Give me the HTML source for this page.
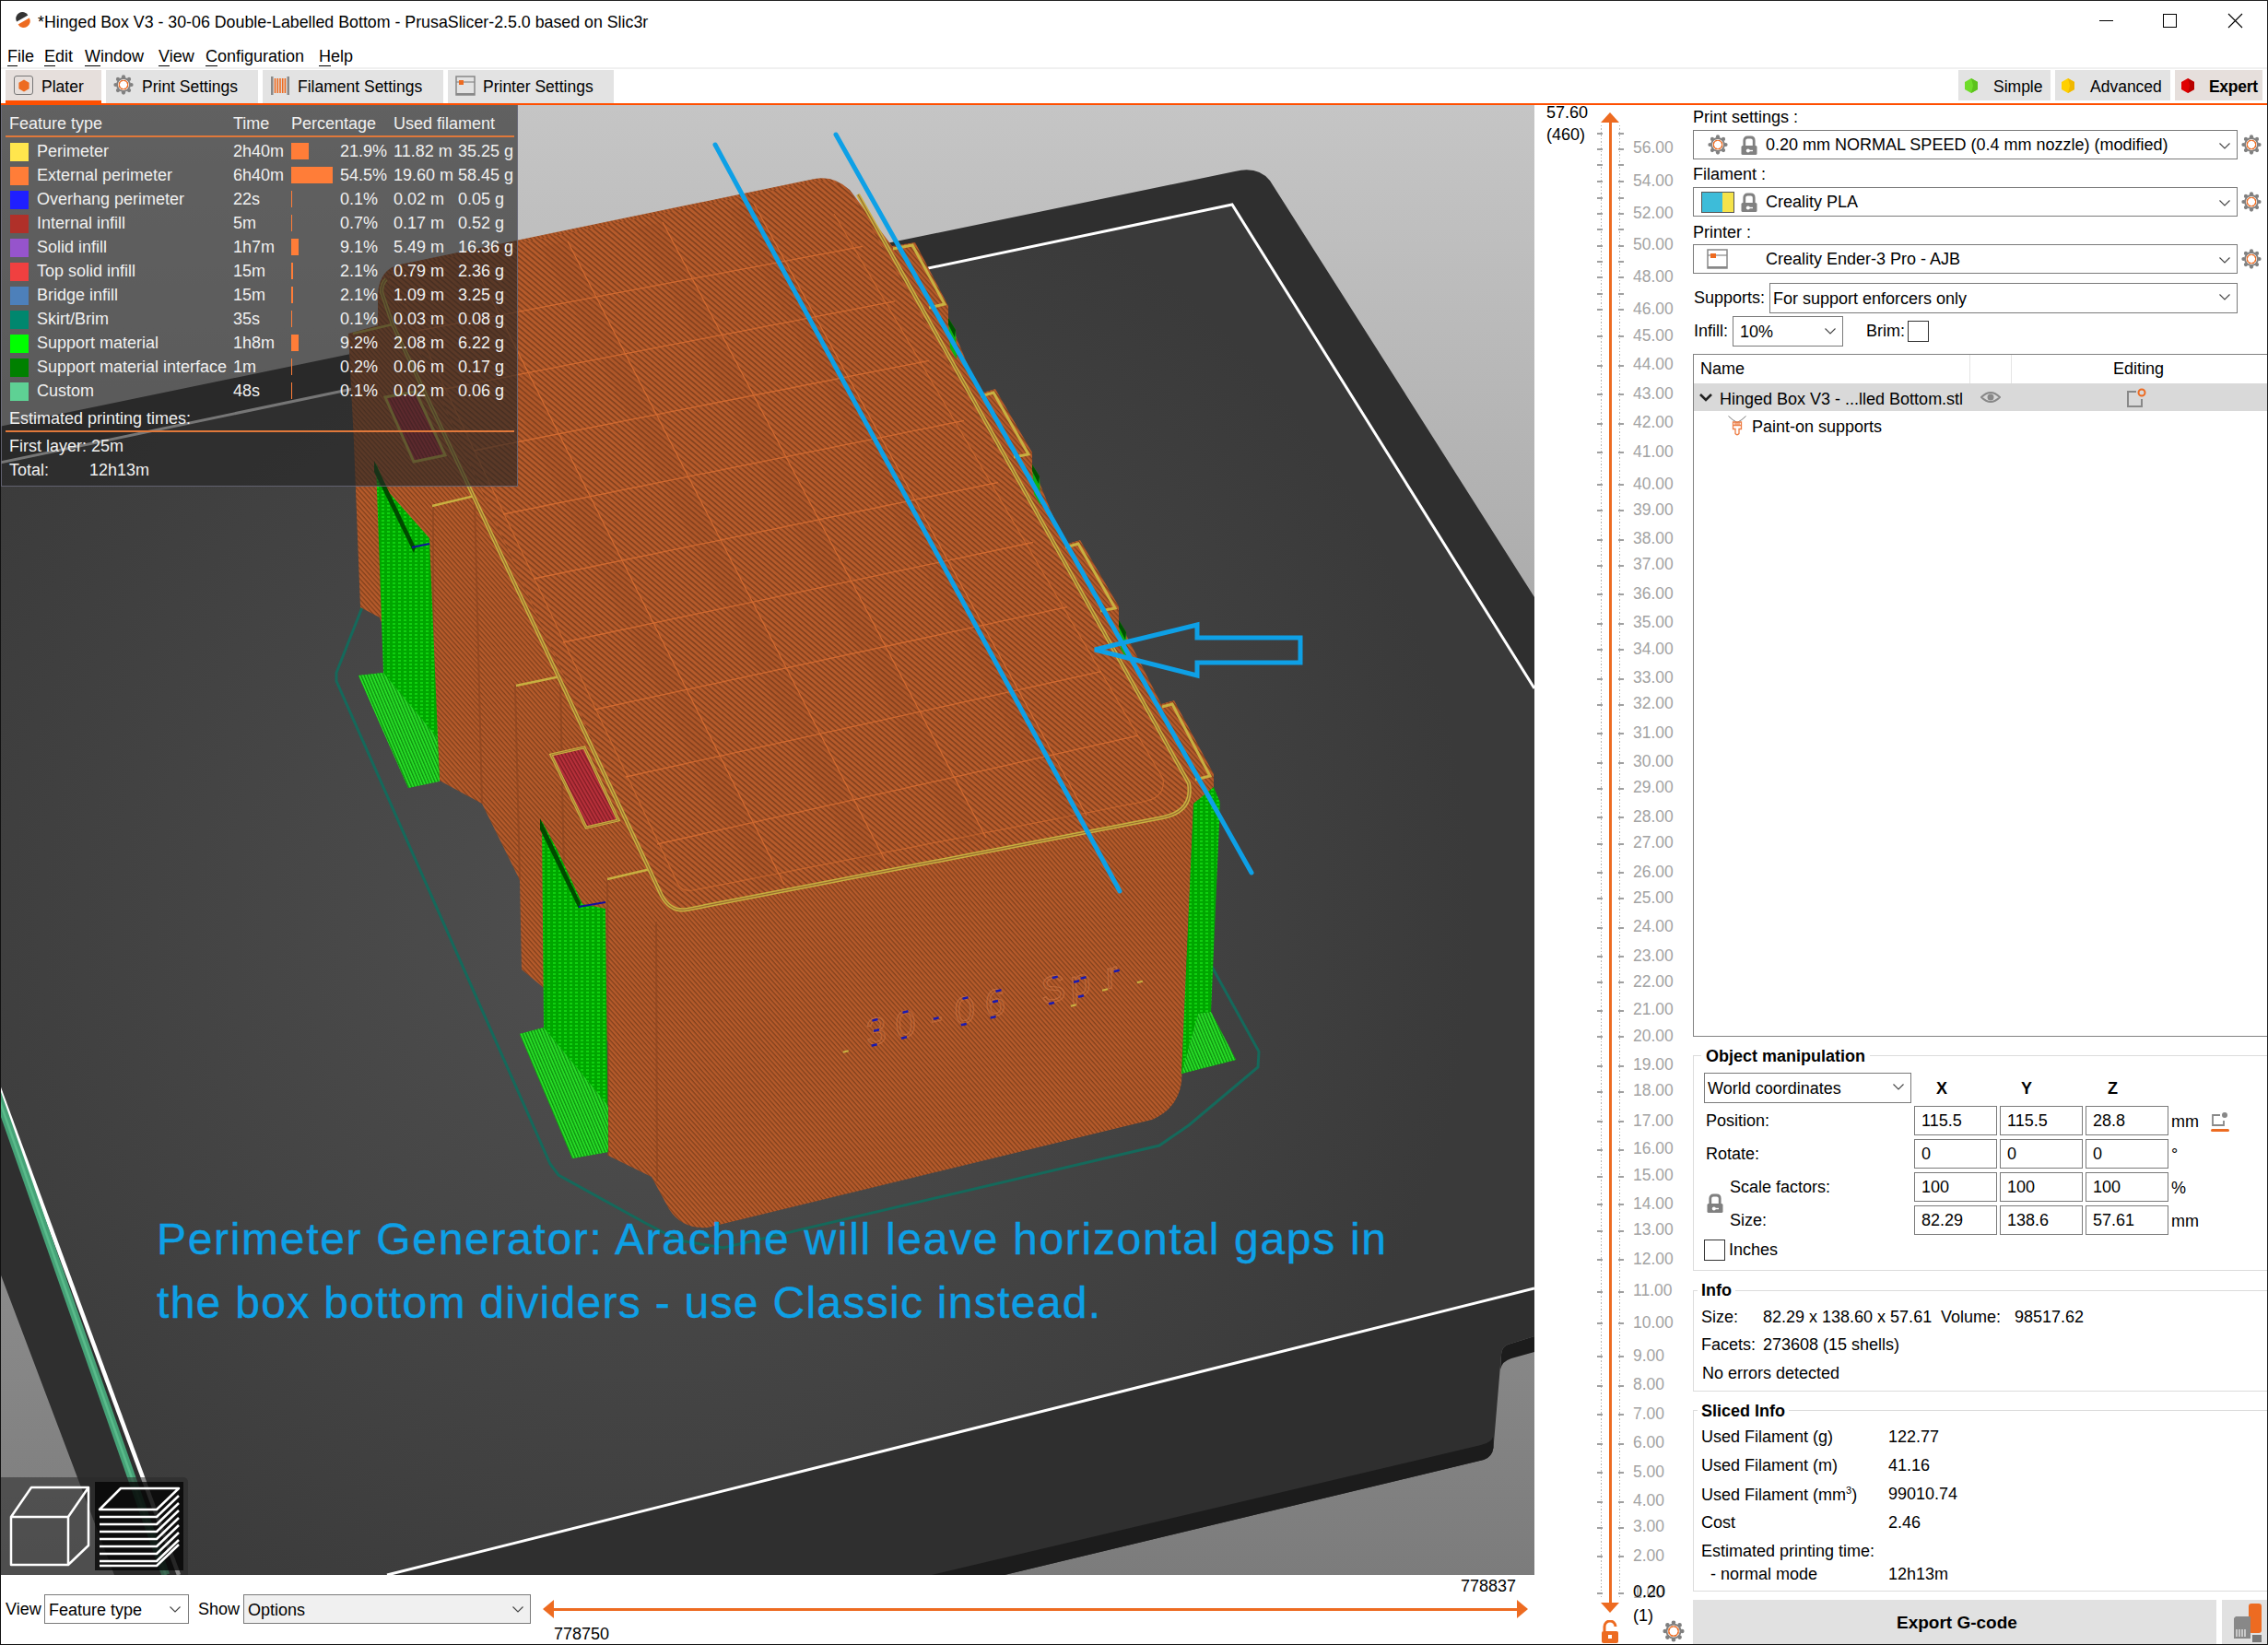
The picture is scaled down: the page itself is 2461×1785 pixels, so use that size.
<!DOCTYPE html>
<html><head><meta charset="utf-8">
<style>
*{box-sizing:border-box}
html,body{margin:0;padding:0}
body{width:2461px;height:1785px;overflow:hidden;position:relative;background:#fff;font-family:"Liberation Sans",sans-serif;color:#000}
.a{position:absolute;white-space:nowrap}
.t17{font-size:17px}
.t18{font-size:18px}
.menu span{position:absolute;top:0}
.menu u{text-decoration:none;border-bottom:1.5px solid #000}
.tab{position:absolute;top:76px;height:36px;background:#e3e3e3;font-size:17.5px}
.tab .lbl{position:absolute;top:8px}
#legend{position:absolute;left:1px;top:114px;width:561px;height:414px;background:rgba(38,38,38,0.63);border-right:1px solid rgba(110,110,128,0.8);border-bottom:1px solid rgba(110,110,128,0.8);border-left:1px solid rgba(110,110,128,0.8);color:#f0f0f0;font-size:18px}
#legend .r{position:absolute;left:0;height:26px;width:556px}
#legend .r span{position:absolute;top:2px}
#legend .sw{position:absolute;left:9px;top:3px;width:20px;height:20px}
#legend .bar{position:absolute;left:314px;top:2.5px;height:18px;background:#ff7d38}
.cb{position:absolute;border:1px solid #7a7a7a;background:#fff}
.cb .v{position:absolute;left:9px;top:4px;font-size:18px}
.chev{position:absolute;width:10px;height:10px;border-right:1.5px solid #333;border-bottom:1.5px solid #333;transform:rotate(45deg)}
.fld{position:absolute;border:1px solid #7a7a7a;background:#fff;height:32px;width:90px;font-size:18px;padding:5px 0 0 7px}
.lab{position:absolute;font-size:18px;white-space:nowrap}
.sl{position:absolute;left:1772px;font-size:17.5px;color:#a3a3a3}
</style></head>
<body>
<!-- title bar -->
<svg class="a" style="left:15px;top:11px" width="20" height="22" viewBox="0 0 20 22">
 <path d="M3.2 12.6 A7 7 0 0 1 15.4 5.6 Z" fill="#333"/>
 <path d="M4.6 15.4 L16.8 8.4 A7 7 0 0 1 4.6 15.4 Z" fill="#ed6b21"/>
</svg>
<div class="a" id="title" style="left:41px;top:14px;font-size:17.8px">*Hinged Box V3 - 30-06 Double-Labelled Bottom - PrusaSlicer-2.5.0 based on Slic3r</div>
<div class="a" style="left:2278px;top:22px;width:15px;height:1px;background:#000"></div>
<div class="a" style="left:2347px;top:15px;width:15px;height:15px;border:1px solid #000"></div>
<svg class="a" style="left:2417px;top:14px" width="17" height="17"><path d="M1 1L16 16M16 1L1 16" stroke="#000" stroke-width="1.1"/></svg>

<!-- menu -->
<div class="a menu" style="left:0;top:51px;height:24px;width:600px;font-size:18px">
 <span style="left:8px"><u>F</u>ile</span>
 <span style="left:48px"><u>E</u>dit</span>
 <span style="left:92px"><u>W</u>indow</span>
 <span style="left:172px"><u>V</u>iew</span>
 <span style="left:223px"><u>C</u>onfiguration</span>
 <span style="left:346px"><u>H</u>elp</span>
</div>
<div class="a" style="left:1px;top:73px;width:2459px;height:2px;background:#f0f0f0"></div>

<!-- tabs -->
<div class="tab" style="left:6px;width:104px;background:#e6dfdc"><div class="a" style="left:0;top:33px;width:104px;height:3px;background:#ff4f00"></div>
 <div class="a" style="left:9px;top:6px;width:21px;height:21px;border:1.5px solid #777;border-radius:3px"></div>
 <svg class="a" style="left:13px;top:10px" width="14" height="14" viewBox="0 0 14 14"><path d="M7 0.5L12.6 3.7V10.3L7 13.5L1.4 10.3V3.7Z" fill="#ed6b21"/></svg>
 <span class="lbl" style="left:39px">Plater</span></div>
<div class="tab" style="left:115px;width:165px">
 <svg class="a" style="left:8px;top:5px" width="22" height="22" viewBox="-1 -1 24 24"><circle cx="11" cy="11" r="8.6" fill="#808080"/><circle cx="20.30" cy="11.00" r="2.3" fill="#808080"/><circle cx="17.58" cy="17.58" r="2.3" fill="#808080"/><circle cx="11.00" cy="20.30" r="2.3" fill="#808080"/><circle cx="4.42" cy="17.58" r="2.3" fill="#808080"/><circle cx="1.70" cy="11.00" r="2.3" fill="#808080"/><circle cx="4.42" cy="4.42" r="2.3" fill="#808080"/><circle cx="11.00" cy="1.70" r="2.3" fill="#808080"/><circle cx="17.58" cy="4.42" r="2.3" fill="#808080"/><circle cx="11" cy="11" r="6.6" fill="#fff"/><circle cx="11" cy="11" r="5.2" fill="none" stroke="#ed6b21" stroke-width="1.3"/><circle cx="15.80" cy="12.99" r="0.9" fill="#ed6b21"/><circle cx="12.99" cy="15.80" r="0.9" fill="#ed6b21"/><circle cx="9.01" cy="15.80" r="0.9" fill="#ed6b21"/><circle cx="6.20" cy="12.99" r="0.9" fill="#ed6b21"/><circle cx="6.20" cy="9.01" r="0.9" fill="#ed6b21"/><circle cx="9.01" cy="6.20" r="0.9" fill="#ed6b21"/><circle cx="12.99" cy="6.20" r="0.9" fill="#ed6b21"/><circle cx="15.80" cy="9.01" r="0.9" fill="#ed6b21"/></svg>
 <span class="lbl" style="left:39px">Print Settings</span></div>
<div class="tab" style="left:285px;width:196px">
 <svg class="a" style="left:8px;top:6px" width="22" height="22" viewBox="0 0 22 22"><rect x="1" y="1" width="2.5" height="20" fill="#888"/><rect x="18.5" y="1" width="2.5" height="20" fill="#888"/><path d="M5.5 3V19M8.3 3V19M11 3V19M13.7 3V19M16.4 3V19" stroke="#ed6b21" stroke-width="1.6"/></svg>
 <span class="lbl" style="left:38px">Filament Settings</span></div>
<div class="tab" style="left:486px;width:180px">
 <svg class="a" style="left:8px;top:6px" width="22" height="22" viewBox="0 0 22 22"><rect x="1" y="1" width="20" height="20" fill="none" stroke="#888" stroke-width="1.5"/><line x1="1" y1="7" x2="21" y2="7" stroke="#888" stroke-width="1.2"/><line x1="1" y1="20" x2="21" y2="20" stroke="#888" stroke-width="2"/><rect x="4" y="5" width="5" height="5" fill="#ed6b21"/></svg>
 <span class="lbl" style="left:38px">Printer Settings</span></div>

<div class="tab" style="height:33px;left:2125px;width:100px">
 <svg class="a" style="left:6px;top:8px" width="16" height="18" viewBox="0 0 16 18"><path d="M8 1L15 5V13L8 17L1 13V5Z" fill="#6fdc2a"/><path d="M8 1L15 5V13L8 17L10 9Z" fill="#5cc21c"/></svg>
 <span class="lbl" style="left:38px">Simple</span></div>
<div class="tab" style="height:33px;left:2230px;width:125px">
 <svg class="a" style="left:6px;top:8px" width="16" height="18" viewBox="0 0 16 18"><path d="M8 1L15 5V13L8 17L1 13V5Z" fill="#ffd000"/><path d="M8 1L15 5V13L8 17L10 9Z" fill="#f0b800"/></svg>
 <span class="lbl" style="left:38px">Advanced</span></div>
<div class="tab" style="height:33px;left:2360px;width:95px;background:#e6dfdc">
 <svg class="a" style="left:6px;top:8px" width="16" height="18" viewBox="0 0 16 18"><path d="M8 1L15 5V13L8 17L1 13V5Z" fill="#e00000"/><path d="M8 1L15 5V13L8 17L10 9Z" fill="#b80000"/></svg>
 <span class="lbl" style="left:37px;font-weight:bold;letter-spacing:-0.3px">Expert</span></div>
<div class="a" style="left:1px;top:112px;width:2459px;height:2px;background:#ff4f00"></div>

<!-- VIEWPORT -->
<svg id="vp" class="a" style="left:0;top:114px" width="1665" height="1595" viewBox="0 114 1665 1595">
 <defs>
  <linearGradient id="bg" x1="0" y1="114" x2="0" y2="1709" gradientUnits="userSpaceOnUse">
   <stop offset="0" stop-color="#c5c5c5"/><stop offset="1" stop-color="#7c7c7c"/>
  </linearGradient>
  <radialGradient id="bedg" cx="700" cy="1000" r="900" gradientUnits="userSpaceOnUse">
   <stop offset="0" stop-color="#505050"/><stop offset="1" stop-color="#3a3a3a"/>
  </radialGradient>
 </defs>
 <rect x="0" y="114" width="1665" height="1595" fill="url(#bg)"/>
 <!-- frame -->
 <path id="frame" d="M-50 473 L1340 186 Q1365 180 1378 196 L1665 648 L1665 1450 L1636 1459 Q1629 1462 1629 1470 L1620.5 1571 Q1619 1581 1610 1584 L1090 1709 L124 1709 L3 1389 L-50 1250 Z" fill="#2f2f2f"/>
 <path d="M1011 1709 L1607 1568 Q1619 1565 1620 1559 L1620.5 1571 Q1619 1581 1610 1584 L1090 1709 Z" fill="#1c1c1c"/><path d="M1628 1486 L1629 1470 Q1629 1462 1636 1459 L1665 1450 L1665 1467 L1640 1474 Q1630 1477 1628 1486 Z" fill="#1c1c1c"/>
 <!-- bed inner -->
 <path id="bed" d="M-100 523 L1337 222 L1665 747 L1665 1398 L420 1709 L194 1709 L0 1183 L-100 1100 Z" fill="url(#bedg)"/>
 <path d="M-100 523 L1337 222 L1665 747 M1665 1398 L420 1709" fill="none" stroke="#fff" stroke-width="3"/><path d="M194 1709 L-2 1178" fill="none" stroke="#fff" stroke-width="4.5"/>
 <path d="M-4.4 1183 L179.8 1709" stroke="#46a277" stroke-width="9"/><path d="M-4.4 1183 L179.8 1709" stroke="#5abb8b" stroke-width="2.5"/>

<!--SCENE-->

 <defs>
  <pattern id="ostripe" width="3.7" height="3.7" patternUnits="userSpaceOnUse" patternTransform="rotate(48)">
   <rect width="3.7" height="3.7" fill="#b65b2b"/><rect y="0" width="3.7" height="1.3" fill="#80401c"/>
  </pattern>
  <pattern id="ostripe2" width="4.5" height="4.5" patternUnits="userSpaceOnUse" patternTransform="rotate(40)">
   <rect width="4.5" height="4.5" fill="#b65b2b"/><rect y="0" width="4.5" height="1.5" fill="#7e3e1c"/>
  </pattern>
  <pattern id="rstripe" width="3.5" height="3.5" patternUnits="userSpaceOnUse" patternTransform="rotate(60)">
   <rect width="3.5" height="3.5" fill="#b8303a"/><rect y="0" width="3.5" height="1.3" fill="#801c24"/>
  </pattern>
  <pattern id="gstripe" width="6" height="4" patternUnits="userSpaceOnUse">
   <rect width="6" height="4" fill="#00a600"/><rect x="0" y="0" width="3" height="2" fill="#10d010"/>
  </pattern>
  <pattern id="gbrim" width="3.2" height="3.2" patternUnits="userSpaceOnUse" patternTransform="rotate(67)">
   <rect width="3.2" height="3.2" fill="#0e900e"/><rect y="0" width="3.2" height="1.9" fill="#28dc28"/>
  </pattern>
 </defs>
 <!-- skirt -->
 <path d="M393 659 L365 730 L365 739 L597 1263 L606 1275 L700 1327 L737 1346 L785 1354 L1258 1243 L1290 1221 L1365 1158 L1366 1141 L1315 1049" fill="none" stroke="#15695b" stroke-width="3"/>

 <path d="M434 287 L884 194 Q905 190 922 206 L968 267 L993 263 L1029 332 L1029 345 L1063 427 L1080 422 L1120 491 L1120 504 L1155 591 L1172 586 L1214 658 L1214 673 L1260 764 L1274 760 L1317 840 L1317 856 L1295 872 L1282 1175 Q1277 1204 1250 1215 L768 1332 Q740 1334 726 1312 L707 1277 L660 1254 L660 1130 L566 1052 L564 955 L523 872 L477 847 L412 670 L391 659 L384 480 L378 362 L410 353 L410 318 Q412 292 434 287 Z" fill="url(#ostripe)"/>
 <path d="M422 305 Q420 294 434 291 L884 197 Q910 193 925 211 L1290 850 Q1296 882 1262 888 L745 988 Q728 991 718 973 Z" fill="url(#ostripe2)"/>
 <path d="M470 548 L470 848 M515 540 L523 872 M559 744 L564 955 M608 735 L612 955 M659 954 L660 1254 M712 1000 L713 1282" stroke="#8a4420" stroke-width="2" opacity="0.6"/>
 <path d="M383 362 L426 352 M469 549 L515 538 M560 744 L608 734 M659 954 L706 943" stroke="#c8b040" stroke-width="2.5"/>
 <path d="M931 211 L1290 850 Q1295 880 1262 887 L745 987 Q728 990 718 972 L426 352 L414 317 Q414 308 419 303" fill="none" stroke="#c8b040" stroke-width="4.2"/><path d="M931 211 L1290 850 Q1295 880 1262 887 L745 987 Q728 990 718 972 L426 352 L414 317 Q414 308 419 303" fill="none" stroke="#9a6a30" stroke-width="1.2"/>
 <path d="M440 330 L735 958 Q740 968 752 966 L1240 870 Q1265 866 1262 845 L905 232" fill="none" stroke="#cf6a30" stroke-width="1.2" opacity="0.8"/>
 <path d="M485 290 L513 284 L851 960 L823 966 Z" fill="#8c4420" opacity="0.16"/>
 <path d="M588 268 L616 262 L961 935 L933 941 Z" fill="#8c4420" opacity="0.16"/>
 <path d="M691 247 L719 241 L1070 909 L1042 915 Z" fill="#8c4420" opacity="0.16"/>
 <path d="M790 227 L818 221 L1179 885 L1151 891 Z" fill="#8c4420" opacity="0.16"/>
 <path d="M513 284 L851 960 M616 262 L961 935 M719 241 L1070 909 M818 221 L1179 885 M453 359 L936 267.3 M483 422 L971 326.8 M514 489 L1008 391.4 M546 558 L1046 456.4 M579 628 L1083 523.5 M611 697 L1121 588.5 M645 770 L1158 658.6 M679 843 L1195 728.7 M713 916 L1235 798.2" stroke="#d86e33" stroke-width="1.3" fill="none" opacity="0.85"/>
 <path d="M969 270 L990 266 L1025 330 L1008 334 M1064 430 L1078 426 L1116 493 L1100 496 M1156 594 L1170 590 L1210 660 L1194 663 M1261 767 L1272 764 L1313 842 L1297 846" fill="none" stroke="#c8b040" stroke-width="3"/>
 <path d="M1029 345 L1037 358 L1038 390 L1031 378 Z M1120 504 L1128 517 L1129 548 L1122 536 Z M1214 673 L1222 686 L1223 716 L1216 704 Z" fill="#10b010"/><path d="M1029 345 L1037 358 L1036 366 L1029 352 Z M1120 504 L1128 517 L1127 525 L1120 511 Z M1214 673 L1222 686 L1221 694 L1214 680 Z" fill="#005000"/>
 <path d="M408 503 L420 532 L466 584 L477 847 L443 855 L389 733 L416 730 Z" fill="url(#gstripe)"/>
 <path d="M389 733 L443 855 L477 848 L474 800 L416 730 Z" fill="url(#gbrim)"/>
 <path d="M406 500 L451 594 L449 600 L406 512 Z" fill="#004a00"/><path d="M447 594 L466 590" stroke="#1010a0" stroke-width="2"/>
 <path d="M588 891 L605 923 L632 981 L657 986 L660 1250 L621 1257 L564 1122 L590 1115 Z" fill="url(#gstripe)"/>
 <path d="M564 1122 L621 1257 L660 1250 L660 1200 L590 1115 Z" fill="url(#gbrim)"/>
 <path d="M586 888 L630 980 L628 986 L586 900 Z" fill="#004a00"/><path d="M628 984 L657 979" stroke="#1010a0" stroke-width="2"/>
 <path d="M1317 854 L1324 871 L1314 1098 L1341 1150 L1282 1165 L1295 872 Z" fill="url(#gstripe)"/>
 <path d="M1282 1165 L1341 1150 L1314 1098 L1300 1100 Z" fill="url(#gbrim)"/>
 <path d="M418 431 L451 425 L483 494 L449 501 Z" fill="url(#rstripe)" stroke="#c8b040" stroke-width="3"/>
 <path d="M598 819 L634 811 L671 890 L636 898 Z" fill="url(#rstripe)" stroke="#c8b040" stroke-width="3.2"/><path d="M598 819 L634 811 L671 890 L636 898 Z" fill="none" stroke="#9a6a30" stroke-width="0.8"/>
 <g transform="translate(917 1141) rotate(-13.4)" font-family="Liberation Sans" font-size="40" font-style="italic" fill="none" stroke="#d27a48" stroke-width="1.1" opacity="0.6"><text x="37" y="0" text-anchor="middle">3</text><text x="70" y="0" text-anchor="middle">0</text><text x="104" y="0" text-anchor="middle">-</text><text x="136" y="0" text-anchor="middle">0</text><text x="170" y="0" text-anchor="middle">6</text><text x="235" y="0" text-anchor="middle">S</text><text x="265" y="0" text-anchor="middle">p</text><text x="300" y="0" text-anchor="middle">r</text></g><path d="M946.5 1107.4 L952.5 1106.0 M948.0 1118.7 L954.0 1117.3 M945.7 1134.7 L951.7 1133.3 M979.5 1098.7 L985.5 1097.3 M978.0 1126.7 L984.0 1125.3 M1012.7 1105.7 L1018.7 1104.3 M1044.5 1083.7 L1050.5 1082.3 M1042.8 1112.3 L1048.8 1110.9 M1080.5 1075.7 L1086.5 1074.3 M1077.0 1087.3 L1083.0 1085.9 M1074.7 1104.4 L1080.7 1103.0 M1141.7 1061.2 L1147.7 1059.8 M1138.0 1089.3 L1144.0 1087.9 M1172.6 1061.7 L1178.6 1060.3 M1165.0 1065.7 L1171.0 1064.3 M1170.0 1081.7 L1176.0 1080.3 M1208.7 1054.2 L1214.7 1052.8" stroke="#1a1ab0" stroke-width="2.6"/><path d="M914.7 1141.7 L920.7 1140.3 M1233.8 1066.2 L1239.8 1064.8 M1196.0 1074.7 L1202.0 1073.3 M1161.8 1091.7 L1167.8 1090.3" stroke="#c8b040" stroke-width="2.2"/>
 <path d="M776 157 L1215 967 M907 146 L1358 947" stroke="#0ea0e6" stroke-width="5" stroke-linecap="round"/>
 <path d="M1188 705 L1299 678 L1299 692 L1411 692 L1411 719 L1299 719 L1299 733 Z" fill="none" stroke="#0ea0e6" stroke-width="5" stroke-linejoin="miter"/>
 <text x="170" y="1361" font-family="Liberation Sans" font-size="48" fill="#0ea0e6" stroke="#0ea0e6" stroke-width="0.4" id="ann1" textLength="1334" lengthAdjust="spacing">Perimeter Generator: Arachne will leave horizontal gaps in</text>
 <text x="170" y="1430" font-family="Liberation Sans" font-size="48" fill="#0ea0e6" stroke="#0ea0e6" stroke-width="0.4" id="ann2" textLength="1024" lengthAdjust="spacing">the box bottom dividers - use Classic instead.</text>
<!--/SCENE-->
</svg>

<div id="legend">
 <div class="r" style="top:8px"><span style="left:8px">Feature type</span><span style="left:251px">Time</span><span style="left:314px">Percentage</span><span style="left:425px">Used filament</span></div>
 <div class="a" style="left:4px;top:33px;width:552px;height:1.5px;background:#e0783a"></div>
 <div class="r" style="top:38px"><div class="sw" style="background:#ffe64d"></div><span style="left:38px">Perimeter</span><span style="left:251px">2h40m</span><div class="bar" style="width:19px"></div><span style="left:367px">21.9%</span><span style="left:425px">11.82 m</span><span style="left:495px">35.25 g</span></div>
 <div class="r" style="top:64px"><div class="sw" style="background:#ff7d38"></div><span style="left:38px">External perimeter</span><span style="left:251px">6h40m</span><div class="bar" style="width:45px"></div><span style="left:367px">54.5%</span><span style="left:425px">19.60 m</span><span style="left:495px">58.45 g</span></div>
 <div class="r" style="top:90px"><div class="sw" style="background:#1f1fff"></div><span style="left:38px">Overhang perimeter</span><span style="left:251px">22s</span><div class="bar" style="width:1px"></div><span style="left:367px">0.1%</span><span style="left:425px">0.02 m</span><span style="left:495px">0.05 g</span></div>
 <div class="r" style="top:116px"><div class="sw" style="background:#b03029"></div><span style="left:38px">Internal infill</span><span style="left:251px">5m</span><div class="bar" style="width:1px"></div><span style="left:367px">0.7%</span><span style="left:425px">0.17 m</span><span style="left:495px">0.52 g</span></div>
 <div class="r" style="top:142px"><div class="sw" style="background:#9654cc"></div><span style="left:38px">Solid infill</span><span style="left:251px">1h7m</span><div class="bar" style="width:8px"></div><span style="left:367px">9.1%</span><span style="left:425px">5.49 m</span><span style="left:495px">16.36 g</span></div>
 <div class="r" style="top:168px"><div class="sw" style="background:#f04040"></div><span style="left:38px">Top solid infill</span><span style="left:251px">15m</span><div class="bar" style="width:2px"></div><span style="left:367px">2.1%</span><span style="left:425px">0.79 m</span><span style="left:495px">2.36 g</span></div>
 <div class="r" style="top:194px"><div class="sw" style="background:#4d80ba"></div><span style="left:38px">Bridge infill</span><span style="left:251px">15m</span><div class="bar" style="width:2px"></div><span style="left:367px">2.1%</span><span style="left:425px">1.09 m</span><span style="left:495px">3.25 g</span></div>
 <div class="r" style="top:220px"><div class="sw" style="background:#00876e"></div><span style="left:38px">Skirt/Brim</span><span style="left:251px">35s</span><div class="bar" style="width:1px"></div><span style="left:367px">0.1%</span><span style="left:425px">0.03 m</span><span style="left:495px">0.08 g</span></div>
 <div class="r" style="top:246px"><div class="sw" style="background:#00ff00"></div><span style="left:38px">Support material</span><span style="left:251px">1h8m</span><div class="bar" style="width:8px"></div><span style="left:367px">9.2%</span><span style="left:425px">2.08 m</span><span style="left:495px">6.22 g</span></div>
 <div class="r" style="top:272px"><div class="sw" style="background:#008000"></div><span style="left:38px">Support material interface</span><span style="left:251px">1m</span><div class="bar" style="width:1px"></div><span style="left:367px">0.2%</span><span style="left:425px">0.06 m</span><span style="left:495px">0.17 g</span></div>
 <div class="r" style="top:298px"><div class="sw" style="background:#5ed194"></div><span style="left:38px">Custom</span><span style="left:251px">48s</span><div class="bar" style="width:1px"></div><span style="left:367px">0.1%</span><span style="left:425px">0.02 m</span><span style="left:495px">0.06 g</span></div>
 <div class="r" style="top:328px"><span style="left:8px">Estimated printing times:</span></div>
 <div class="a" style="left:4px;top:353px;width:552px;height:1.5px;background:#e0783a"></div>
 <div class="r" style="top:358px"><span style="left:8px">First layer: 25m</span></div>
 <div class="r" style="top:384px"><span style="left:8px">Total:</span><span style="left:95px">12h13m</span></div>
</div>
<div class="a" style="left:1px;top:1603px;width:203px;height:106px;background:rgba(40,40,40,0.55);border-radius:0 5px 0 0"></div>
<div class="a" style="left:103px;top:1608px;width:96px;height:96px;background:rgba(0,0,0,0.72)"></div>
<svg class="a" style="left:0;top:1600px" width="210" height="109" viewBox="0 1600 210 109">
 <path d="M12 1646 L34 1614 L96 1614 L96 1677 L74 1698 L12 1698 Z M12 1646 L74 1646 L96 1614 M74 1646 L74 1698" fill="none" stroke="#fff" stroke-width="2.5" stroke-linejoin="round"/>
 <g fill="none" stroke="#fff" stroke-width="2.5" stroke-linejoin="round">
  <path d="M108 1638 L131 1615 L194 1615 L170 1638 Z"/>
  <path d="M108 1646 L170 1646 L194 1623 M108 1654 L170 1654 L194 1631 M108 1662 L170 1662 L194 1639 M108 1670 L170 1670 L194 1647 M108 1678 L170 1678 L194 1655 M108 1686 L170 1686 L194 1663 M108 1694 L170 1694 L194 1671 M108 1699 L170 1699 L194 1676"/>
 </g>
</svg>
<!-- layer slider -->
<div class="a" style="left:1736.5px;top:136px;width:1.5px;height:1598px;background:repeating-linear-gradient(to bottom,#b4b4b4 0,#b4b4b4 1.2px,transparent 1.2px,transparent 3.5px)"></div>
<div class="a" style="left:1756.5px;top:136px;width:1.5px;height:1598px;background:repeating-linear-gradient(to bottom,#b4b4b4 0,#b4b4b4 1.2px,transparent 1.2px,transparent 3.5px)"></div>
<div class="a" style="left:1746px;top:131px;width:3px;height:1610px;background:#ed6b21"></div>
<svg class="a" style="left:1736px;top:120px" width="22" height="14"><path d="M1 13 L11 2 L21 13 Z" fill="#ed6b21"/></svg>
<svg class="a" style="left:1736px;top:1738px" width="22" height="14"><path d="M1 1 L11 12 L21 1 Z" fill="#ed6b21"/></svg>
<div class="a" style="left:1733px;top:144px;width:6px;height:1.5px;background:#a0a0a0"></div><div class="a" style="left:1756px;top:144px;width:6px;height:1.5px;background:#a0a0a0"></div>
<div class="a" style="left:1733px;top:161px;width:6px;height:1.5px;background:#a0a0a0"></div><div class="a" style="left:1756px;top:161px;width:6px;height:1.5px;background:#a0a0a0"></div>
<div class="a" style="left:1733px;top:196px;width:6px;height:1.5px;background:#a0a0a0"></div><div class="a" style="left:1756px;top:196px;width:6px;height:1.5px;background:#a0a0a0"></div>
<div class="a" style="left:1733px;top:231px;width:6px;height:1.5px;background:#a0a0a0"></div><div class="a" style="left:1756px;top:231px;width:6px;height:1.5px;background:#a0a0a0"></div>
<div class="a" style="left:1733px;top:266px;width:6px;height:1.5px;background:#a0a0a0"></div><div class="a" style="left:1756px;top:266px;width:6px;height:1.5px;background:#a0a0a0"></div>
<div class="a" style="left:1733px;top:300px;width:6px;height:1.5px;background:#a0a0a0"></div><div class="a" style="left:1756px;top:300px;width:6px;height:1.5px;background:#a0a0a0"></div>
<div class="a" style="left:1733px;top:335px;width:6px;height:1.5px;background:#a0a0a0"></div><div class="a" style="left:1756px;top:335px;width:6px;height:1.5px;background:#a0a0a0"></div>
<div class="a" style="left:1733px;top:364px;width:6px;height:1.5px;background:#a0a0a0"></div><div class="a" style="left:1756px;top:364px;width:6px;height:1.5px;background:#a0a0a0"></div>
<div class="a" style="left:1733px;top:396px;width:6px;height:1.5px;background:#a0a0a0"></div><div class="a" style="left:1756px;top:396px;width:6px;height:1.5px;background:#a0a0a0"></div>
<div class="a" style="left:1733px;top:427px;width:6px;height:1.5px;background:#a0a0a0"></div><div class="a" style="left:1756px;top:427px;width:6px;height:1.5px;background:#a0a0a0"></div>
<div class="a" style="left:1733px;top:459px;width:6px;height:1.5px;background:#a0a0a0"></div><div class="a" style="left:1756px;top:459px;width:6px;height:1.5px;background:#a0a0a0"></div>
<div class="a" style="left:1733px;top:490px;width:6px;height:1.5px;background:#a0a0a0"></div><div class="a" style="left:1756px;top:490px;width:6px;height:1.5px;background:#a0a0a0"></div>
<div class="a" style="left:1733px;top:525px;width:6px;height:1.5px;background:#a0a0a0"></div><div class="a" style="left:1756px;top:525px;width:6px;height:1.5px;background:#a0a0a0"></div>
<div class="a" style="left:1733px;top:553px;width:6px;height:1.5px;background:#a0a0a0"></div><div class="a" style="left:1756px;top:553px;width:6px;height:1.5px;background:#a0a0a0"></div>
<div class="a" style="left:1733px;top:585px;width:6px;height:1.5px;background:#a0a0a0"></div><div class="a" style="left:1756px;top:585px;width:6px;height:1.5px;background:#a0a0a0"></div>
<div class="a" style="left:1733px;top:613px;width:6px;height:1.5px;background:#a0a0a0"></div><div class="a" style="left:1756px;top:613px;width:6px;height:1.5px;background:#a0a0a0"></div>
<div class="a" style="left:1733px;top:644px;width:6px;height:1.5px;background:#a0a0a0"></div><div class="a" style="left:1756px;top:644px;width:6px;height:1.5px;background:#a0a0a0"></div>
<div class="a" style="left:1733px;top:676px;width:6px;height:1.5px;background:#a0a0a0"></div><div class="a" style="left:1756px;top:676px;width:6px;height:1.5px;background:#a0a0a0"></div>
<div class="a" style="left:1733px;top:704px;width:6px;height:1.5px;background:#a0a0a0"></div><div class="a" style="left:1756px;top:704px;width:6px;height:1.5px;background:#a0a0a0"></div>
<div class="a" style="left:1733px;top:736px;width:6px;height:1.5px;background:#a0a0a0"></div><div class="a" style="left:1756px;top:736px;width:6px;height:1.5px;background:#a0a0a0"></div>
<div class="a" style="left:1733px;top:764px;width:6px;height:1.5px;background:#a0a0a0"></div><div class="a" style="left:1756px;top:764px;width:6px;height:1.5px;background:#a0a0a0"></div>
<div class="a" style="left:1733px;top:795px;width:6px;height:1.5px;background:#a0a0a0"></div><div class="a" style="left:1756px;top:795px;width:6px;height:1.5px;background:#a0a0a0"></div>
<div class="a" style="left:1733px;top:827px;width:6px;height:1.5px;background:#a0a0a0"></div><div class="a" style="left:1756px;top:827px;width:6px;height:1.5px;background:#a0a0a0"></div>
<div class="a" style="left:1733px;top:855px;width:6px;height:1.5px;background:#a0a0a0"></div><div class="a" style="left:1756px;top:855px;width:6px;height:1.5px;background:#a0a0a0"></div>
<div class="a" style="left:1733px;top:886px;width:6px;height:1.5px;background:#a0a0a0"></div><div class="a" style="left:1756px;top:886px;width:6px;height:1.5px;background:#a0a0a0"></div>
<div class="a" style="left:1733px;top:915px;width:6px;height:1.5px;background:#a0a0a0"></div><div class="a" style="left:1756px;top:915px;width:6px;height:1.5px;background:#a0a0a0"></div>
<div class="a" style="left:1733px;top:946px;width:6px;height:1.5px;background:#a0a0a0"></div><div class="a" style="left:1756px;top:946px;width:6px;height:1.5px;background:#a0a0a0"></div>
<div class="a" style="left:1733px;top:974px;width:6px;height:1.5px;background:#a0a0a0"></div><div class="a" style="left:1756px;top:974px;width:6px;height:1.5px;background:#a0a0a0"></div>
<div class="a" style="left:1733px;top:1006px;width:6px;height:1.5px;background:#a0a0a0"></div><div class="a" style="left:1756px;top:1006px;width:6px;height:1.5px;background:#a0a0a0"></div>
<div class="a" style="left:1733px;top:1037px;width:6px;height:1.5px;background:#a0a0a0"></div><div class="a" style="left:1756px;top:1037px;width:6px;height:1.5px;background:#a0a0a0"></div>
<div class="a" style="left:1733px;top:1065px;width:6px;height:1.5px;background:#a0a0a0"></div><div class="a" style="left:1756px;top:1065px;width:6px;height:1.5px;background:#a0a0a0"></div>
<div class="a" style="left:1733px;top:1096px;width:6px;height:1.5px;background:#a0a0a0"></div><div class="a" style="left:1756px;top:1096px;width:6px;height:1.5px;background:#a0a0a0"></div>
<div class="a" style="left:1733px;top:1124px;width:6px;height:1.5px;background:#a0a0a0"></div><div class="a" style="left:1756px;top:1124px;width:6px;height:1.5px;background:#a0a0a0"></div>
<div class="a" style="left:1733px;top:1156px;width:6px;height:1.5px;background:#a0a0a0"></div><div class="a" style="left:1756px;top:1156px;width:6px;height:1.5px;background:#a0a0a0"></div>
<div class="a" style="left:1733px;top:1184px;width:6px;height:1.5px;background:#a0a0a0"></div><div class="a" style="left:1756px;top:1184px;width:6px;height:1.5px;background:#a0a0a0"></div>
<div class="a" style="left:1733px;top:1216px;width:6px;height:1.5px;background:#a0a0a0"></div><div class="a" style="left:1756px;top:1216px;width:6px;height:1.5px;background:#a0a0a0"></div>
<div class="a" style="left:1733px;top:1247px;width:6px;height:1.5px;background:#a0a0a0"></div><div class="a" style="left:1756px;top:1247px;width:6px;height:1.5px;background:#a0a0a0"></div>
<div class="a" style="left:1733px;top:1276px;width:6px;height:1.5px;background:#a0a0a0"></div><div class="a" style="left:1756px;top:1276px;width:6px;height:1.5px;background:#a0a0a0"></div>
<div class="a" style="left:1733px;top:1306px;width:6px;height:1.5px;background:#a0a0a0"></div><div class="a" style="left:1756px;top:1306px;width:6px;height:1.5px;background:#a0a0a0"></div>
<div class="a" style="left:1733px;top:1335px;width:6px;height:1.5px;background:#a0a0a0"></div><div class="a" style="left:1756px;top:1335px;width:6px;height:1.5px;background:#a0a0a0"></div>
<div class="a" style="left:1733px;top:1366px;width:6px;height:1.5px;background:#a0a0a0"></div><div class="a" style="left:1756px;top:1366px;width:6px;height:1.5px;background:#a0a0a0"></div>
<div class="a" style="left:1733px;top:1401px;width:6px;height:1.5px;background:#a0a0a0"></div><div class="a" style="left:1756px;top:1401px;width:6px;height:1.5px;background:#a0a0a0"></div>
<div class="a" style="left:1733px;top:1435px;width:6px;height:1.5px;background:#a0a0a0"></div><div class="a" style="left:1756px;top:1435px;width:6px;height:1.5px;background:#a0a0a0"></div>
<div class="a" style="left:1733px;top:1471px;width:6px;height:1.5px;background:#a0a0a0"></div><div class="a" style="left:1756px;top:1471px;width:6px;height:1.5px;background:#a0a0a0"></div>
<div class="a" style="left:1733px;top:1503px;width:6px;height:1.5px;background:#a0a0a0"></div><div class="a" style="left:1756px;top:1503px;width:6px;height:1.5px;background:#a0a0a0"></div>
<div class="a" style="left:1733px;top:1534px;width:6px;height:1.5px;background:#a0a0a0"></div><div class="a" style="left:1756px;top:1534px;width:6px;height:1.5px;background:#a0a0a0"></div>
<div class="a" style="left:1733px;top:1566px;width:6px;height:1.5px;background:#a0a0a0"></div><div class="a" style="left:1756px;top:1566px;width:6px;height:1.5px;background:#a0a0a0"></div>
<div class="a" style="left:1733px;top:1597px;width:6px;height:1.5px;background:#a0a0a0"></div><div class="a" style="left:1756px;top:1597px;width:6px;height:1.5px;background:#a0a0a0"></div>
<div class="a" style="left:1733px;top:1629px;width:6px;height:1.5px;background:#a0a0a0"></div><div class="a" style="left:1756px;top:1629px;width:6px;height:1.5px;background:#a0a0a0"></div>
<div class="a" style="left:1733px;top:1657px;width:6px;height:1.5px;background:#a0a0a0"></div><div class="a" style="left:1756px;top:1657px;width:6px;height:1.5px;background:#a0a0a0"></div>
<div class="a" style="left:1733px;top:1688px;width:6px;height:1.5px;background:#a0a0a0"></div><div class="a" style="left:1756px;top:1688px;width:6px;height:1.5px;background:#a0a0a0"></div>
<div class="a" style="left:1733px;top:1728px;width:6px;height:1.5px;background:#a0a0a0"></div><div class="a" style="left:1756px;top:1728px;width:6px;height:1.5px;background:#a0a0a0"></div>
<div class="a" style="left:1733px;top:178px;width:6px;height:1.5px;background:#a0a0a0"></div><div class="a" style="left:1756px;top:178px;width:6px;height:1.5px;background:#a0a0a0"></div>
<div class="a" style="left:1733px;top:214px;width:6px;height:1.5px;background:#a0a0a0"></div><div class="a" style="left:1756px;top:214px;width:6px;height:1.5px;background:#a0a0a0"></div>
<div class="a" style="left:1733px;top:248px;width:6px;height:1.5px;background:#a0a0a0"></div><div class="a" style="left:1756px;top:248px;width:6px;height:1.5px;background:#a0a0a0"></div>
<div class="a" style="left:1733px;top:283px;width:6px;height:1.5px;background:#a0a0a0"></div><div class="a" style="left:1756px;top:283px;width:6px;height:1.5px;background:#a0a0a0"></div>
<div class="a" style="left:1733px;top:318px;width:6px;height:1.5px;background:#a0a0a0"></div><div class="a" style="left:1756px;top:318px;width:6px;height:1.5px;background:#a0a0a0"></div>
<div class="sl" style="top:150px">56.00</div>
<div class="sl" style="top:186px">54.00</div>
<div class="sl" style="top:221px">52.00</div>
<div class="sl" style="top:255px">50.00</div>
<div class="sl" style="top:290px">48.00</div>
<div class="sl" style="top:325px">46.00</div>
<div class="sl" style="top:354px">45.00</div>
<div class="sl" style="top:385px">44.00</div>
<div class="sl" style="top:417px">43.00</div>
<div class="sl" style="top:448px">42.00</div>
<div class="sl" style="top:480px">41.00</div>
<div class="sl" style="top:515px">40.00</div>
<div class="sl" style="top:543px">39.00</div>
<div class="sl" style="top:574px">38.00</div>
<div class="sl" style="top:602px">37.00</div>
<div class="sl" style="top:634px">36.00</div>
<div class="sl" style="top:665px">35.00</div>
<div class="sl" style="top:694px">34.00</div>
<div class="sl" style="top:725px">33.00</div>
<div class="sl" style="top:753px">32.00</div>
<div class="sl" style="top:785px">31.00</div>
<div class="sl" style="top:816px">30.00</div>
<div class="sl" style="top:844px">29.00</div>
<div class="sl" style="top:876px">28.00</div>
<div class="sl" style="top:904px">27.00</div>
<div class="sl" style="top:936px">26.00</div>
<div class="sl" style="top:964px">25.00</div>
<div class="sl" style="top:995px">24.00</div>
<div class="sl" style="top:1027px">23.00</div>
<div class="sl" style="top:1055px">22.00</div>
<div class="sl" style="top:1085px">21.00</div>
<div class="sl" style="top:1114px">20.00</div>
<div class="sl" style="top:1145px">19.00</div>
<div class="sl" style="top:1173px">18.00</div>
<div class="sl" style="top:1206px">17.00</div>
<div class="sl" style="top:1236px">16.00</div>
<div class="sl" style="top:1265px">15.00</div>
<div class="sl" style="top:1296px">14.00</div>
<div class="sl" style="top:1324px">13.00</div>
<div class="sl" style="top:1356px">12.00</div>
<div class="sl" style="top:1390px">11.00</div>
<div class="sl" style="top:1425px">10.00</div>
<div class="sl" style="top:1461px">9.00</div>
<div class="sl" style="top:1492px">8.00</div>
<div class="sl" style="top:1524px">7.00</div>
<div class="sl" style="top:1555px">6.00</div>
<div class="sl" style="top:1587px">5.00</div>
<div class="sl" style="top:1618px">4.00</div>
<div class="sl" style="top:1646px">3.00</div>
<div class="sl" style="top:1678px">2.00</div>
<div class="sl" style="top:1718px">1.00</div>
<div class="a t18" style="left:1678px;top:112px">57.60</div>
<div class="a t18" style="left:1678px;top:136px">(460)</div>
<div class="a t18" style="left:1772px;top:1717px">0.20</div>
<div class="a t18" style="left:1772px;top:1743px">(1)</div>
<svg class="a" style="left:1736px;top:1758px" width="22" height="26" viewBox="0 0 22 26"><path d="M5 12 V7 A6 6 0 0 1 17 7" fill="none" stroke="#ed6b21" stroke-width="3"/><rect x="2" y="12" width="18" height="13" rx="2" fill="#ed6b21"/><rect x="9" y="16" width="4" height="4" fill="#fff"/></svg>
<svg class="a" style="left:1804px;top:1758px" width="24" height="24" viewBox="-1 -1 24 24"><circle cx="11" cy="11" r="8.6" fill="#808080"/><circle cx="20.30" cy="11.00" r="2.3" fill="#808080"/><circle cx="17.58" cy="17.58" r="2.3" fill="#808080"/><circle cx="11.00" cy="20.30" r="2.3" fill="#808080"/><circle cx="4.42" cy="17.58" r="2.3" fill="#808080"/><circle cx="1.70" cy="11.00" r="2.3" fill="#808080"/><circle cx="4.42" cy="4.42" r="2.3" fill="#808080"/><circle cx="11.00" cy="1.70" r="2.3" fill="#808080"/><circle cx="17.58" cy="4.42" r="2.3" fill="#808080"/><circle cx="11" cy="11" r="6.6" fill="#fff"/><circle cx="11" cy="11" r="5.2" fill="none" stroke="#ed6b21" stroke-width="1.3"/><circle cx="15.80" cy="12.99" r="0.9" fill="#ed6b21"/><circle cx="12.99" cy="15.80" r="0.9" fill="#ed6b21"/><circle cx="9.01" cy="15.80" r="0.9" fill="#ed6b21"/><circle cx="6.20" cy="12.99" r="0.9" fill="#ed6b21"/><circle cx="6.20" cy="9.01" r="0.9" fill="#ed6b21"/><circle cx="9.01" cy="6.20" r="0.9" fill="#ed6b21"/><circle cx="12.99" cy="6.20" r="0.9" fill="#ed6b21"/><circle cx="15.80" cy="9.01" r="0.9" fill="#ed6b21"/></svg>
<!-- sidebar -->
<div class="lab" style="left:1837px;top:117px">Print settings :</div>
<div class="cb" style="left:1837px;top:141px;width:591px;height:32px"></div>
<svg class="a" style="left:1853px;top:146px" width="22" height="22" viewBox="-1 -1 24 24"><circle cx="11" cy="11" r="8.6" fill="#808080"/><circle cx="20.30" cy="11.00" r="2.3" fill="#808080"/><circle cx="17.58" cy="17.58" r="2.3" fill="#808080"/><circle cx="11.00" cy="20.30" r="2.3" fill="#808080"/><circle cx="4.42" cy="17.58" r="2.3" fill="#808080"/><circle cx="1.70" cy="11.00" r="2.3" fill="#808080"/><circle cx="4.42" cy="4.42" r="2.3" fill="#808080"/><circle cx="11.00" cy="1.70" r="2.3" fill="#808080"/><circle cx="17.58" cy="4.42" r="2.3" fill="#808080"/><circle cx="11" cy="11" r="6.6" fill="#fff"/><circle cx="11" cy="11" r="5.2" fill="none" stroke="#ed6b21" stroke-width="1.3"/><circle cx="15.80" cy="12.99" r="0.9" fill="#ed6b21"/><circle cx="12.99" cy="15.80" r="0.9" fill="#ed6b21"/><circle cx="9.01" cy="15.80" r="0.9" fill="#ed6b21"/><circle cx="6.20" cy="12.99" r="0.9" fill="#ed6b21"/><circle cx="6.20" cy="9.01" r="0.9" fill="#ed6b21"/><circle cx="9.01" cy="6.20" r="0.9" fill="#ed6b21"/><circle cx="12.99" cy="6.20" r="0.9" fill="#ed6b21"/><circle cx="15.80" cy="9.01" r="0.9" fill="#ed6b21"/></svg>
<svg class="a" style="left:1889px;top:147px" width="18" height="22" viewBox="0 0 18 22"><path d="M3.8 11 V5.5 Q3.8 2 7.3 2 H10.7 Q14.2 2 14.2 5.5 V11" fill="none" stroke="#808080" stroke-width="2.8"/><rect x="0.5" y="11" width="17" height="10" rx="1.5" fill="#808080"/><circle cx="7.8" cy="16.5" r="2" fill="#fff"/><rect x="8" y="15.8" width="5" height="1.4" fill="#fff"/></svg>
<div class="lab" style="left:1916px;top:147px">0.20 mm NORMAL SPEED (0.4 mm nozzle) (modified)</div>
<svg class="a" style="left:2407px;top:154px" width="14" height="9"><path d="M1.5 1.5 L7 7 L12.5 1.5" fill="none" stroke="#444" stroke-width="1.1"/></svg>
<svg class="a" style="left:2432px;top:146px" width="22" height="22" viewBox="-1 -1 24 24"><circle cx="11" cy="11" r="8.6" fill="#808080"/><circle cx="20.30" cy="11.00" r="2.3" fill="#808080"/><circle cx="17.58" cy="17.58" r="2.3" fill="#808080"/><circle cx="11.00" cy="20.30" r="2.3" fill="#808080"/><circle cx="4.42" cy="17.58" r="2.3" fill="#808080"/><circle cx="1.70" cy="11.00" r="2.3" fill="#808080"/><circle cx="4.42" cy="4.42" r="2.3" fill="#808080"/><circle cx="11.00" cy="1.70" r="2.3" fill="#808080"/><circle cx="17.58" cy="4.42" r="2.3" fill="#808080"/><circle cx="11" cy="11" r="6.6" fill="#fff"/><circle cx="11" cy="11" r="5.2" fill="none" stroke="#ed6b21" stroke-width="1.3"/><circle cx="15.80" cy="12.99" r="0.9" fill="#ed6b21"/><circle cx="12.99" cy="15.80" r="0.9" fill="#ed6b21"/><circle cx="9.01" cy="15.80" r="0.9" fill="#ed6b21"/><circle cx="6.20" cy="12.99" r="0.9" fill="#ed6b21"/><circle cx="6.20" cy="9.01" r="0.9" fill="#ed6b21"/><circle cx="9.01" cy="6.20" r="0.9" fill="#ed6b21"/><circle cx="12.99" cy="6.20" r="0.9" fill="#ed6b21"/><circle cx="15.80" cy="9.01" r="0.9" fill="#ed6b21"/></svg>
<div class="lab" style="left:1837px;top:179px">Filament :</div>
<div class="cb" style="left:1837px;top:203px;width:591px;height:32px"></div>
<div class="a" style="left:1846px;top:208px;width:36px;height:23px;background:#3dbcd9;border:1px solid #555"></div><div class="a" style="left:1869px;top:209px;width:12px;height:21px;background:#f5e34a"></div>
<svg class="a" style="left:1889px;top:209px" width="18" height="22" viewBox="0 0 18 22"><path d="M3.8 11 V5.5 Q3.8 2 7.3 2 H10.7 Q14.2 2 14.2 5.5 V11" fill="none" stroke="#808080" stroke-width="2.8"/><rect x="0.5" y="11" width="17" height="10" rx="1.5" fill="#808080"/><circle cx="7.8" cy="16.5" r="2" fill="#fff"/><rect x="8" y="15.8" width="5" height="1.4" fill="#fff"/></svg>
<div class="lab" style="left:1916px;top:209px">Creality PLA</div>
<svg class="a" style="left:2407px;top:216px" width="14" height="9"><path d="M1.5 1.5 L7 7 L12.5 1.5" fill="none" stroke="#444" stroke-width="1.1"/></svg>
<svg class="a" style="left:2432px;top:208px" width="22" height="22" viewBox="-1 -1 24 24"><circle cx="11" cy="11" r="8.6" fill="#808080"/><circle cx="20.30" cy="11.00" r="2.3" fill="#808080"/><circle cx="17.58" cy="17.58" r="2.3" fill="#808080"/><circle cx="11.00" cy="20.30" r="2.3" fill="#808080"/><circle cx="4.42" cy="17.58" r="2.3" fill="#808080"/><circle cx="1.70" cy="11.00" r="2.3" fill="#808080"/><circle cx="4.42" cy="4.42" r="2.3" fill="#808080"/><circle cx="11.00" cy="1.70" r="2.3" fill="#808080"/><circle cx="17.58" cy="4.42" r="2.3" fill="#808080"/><circle cx="11" cy="11" r="6.6" fill="#fff"/><circle cx="11" cy="11" r="5.2" fill="none" stroke="#ed6b21" stroke-width="1.3"/><circle cx="15.80" cy="12.99" r="0.9" fill="#ed6b21"/><circle cx="12.99" cy="15.80" r="0.9" fill="#ed6b21"/><circle cx="9.01" cy="15.80" r="0.9" fill="#ed6b21"/><circle cx="6.20" cy="12.99" r="0.9" fill="#ed6b21"/><circle cx="6.20" cy="9.01" r="0.9" fill="#ed6b21"/><circle cx="9.01" cy="6.20" r="0.9" fill="#ed6b21"/><circle cx="12.99" cy="6.20" r="0.9" fill="#ed6b21"/><circle cx="15.80" cy="9.01" r="0.9" fill="#ed6b21"/></svg>
<div class="lab" style="left:1837px;top:242px">Printer :</div>
<div class="cb" style="left:1837px;top:265px;width:591px;height:32px"></div>
<svg class="a" style="left:1852px;top:270px" width="24" height="22" viewBox="0 0 24 22"><rect x="1" y="1" width="21" height="20" fill="none" stroke="#888" stroke-width="1.5"/><line x1="1" y1="7" x2="22" y2="7" stroke="#888" stroke-width="1.2"/><line x1="1" y1="20" x2="22" y2="20" stroke="#888" stroke-width="2"/><rect x="4" y="5" width="6" height="5" fill="#ed6b21"/></svg>
<div class="lab" style="left:1916px;top:271px">Creality Ender-3 Pro - AJB</div>
<svg class="a" style="left:2407px;top:278px" width="14" height="9"><path d="M1.5 1.5 L7 7 L12.5 1.5" fill="none" stroke="#444" stroke-width="1.1"/></svg>
<svg class="a" style="left:2432px;top:270px" width="22" height="22" viewBox="-1 -1 24 24"><circle cx="11" cy="11" r="8.6" fill="#808080"/><circle cx="20.30" cy="11.00" r="2.3" fill="#808080"/><circle cx="17.58" cy="17.58" r="2.3" fill="#808080"/><circle cx="11.00" cy="20.30" r="2.3" fill="#808080"/><circle cx="4.42" cy="17.58" r="2.3" fill="#808080"/><circle cx="1.70" cy="11.00" r="2.3" fill="#808080"/><circle cx="4.42" cy="4.42" r="2.3" fill="#808080"/><circle cx="11.00" cy="1.70" r="2.3" fill="#808080"/><circle cx="17.58" cy="4.42" r="2.3" fill="#808080"/><circle cx="11" cy="11" r="6.6" fill="#fff"/><circle cx="11" cy="11" r="5.2" fill="none" stroke="#ed6b21" stroke-width="1.3"/><circle cx="15.80" cy="12.99" r="0.9" fill="#ed6b21"/><circle cx="12.99" cy="15.80" r="0.9" fill="#ed6b21"/><circle cx="9.01" cy="15.80" r="0.9" fill="#ed6b21"/><circle cx="6.20" cy="12.99" r="0.9" fill="#ed6b21"/><circle cx="6.20" cy="9.01" r="0.9" fill="#ed6b21"/><circle cx="9.01" cy="6.20" r="0.9" fill="#ed6b21"/><circle cx="12.99" cy="6.20" r="0.9" fill="#ed6b21"/><circle cx="15.80" cy="9.01" r="0.9" fill="#ed6b21"/></svg>
<div class="lab" style="left:1838px;top:313px">Supports:</div>
<div class="cb" style="left:1920px;top:307px;width:508px;height:33px"></div>
<div class="lab" style="left:1924px;top:314px">For support enforcers only</div>
<svg class="a" style="left:2407px;top:318px" width="14" height="9"><path d="M1.5 1.5 L7 7 L12.5 1.5" fill="none" stroke="#444" stroke-width="1.1"/></svg>
<div class="lab" style="left:1838px;top:349px">Infill:</div>
<div class="cb" style="left:1880px;top:343px;width:120px;height:33px"></div>
<div class="lab" style="left:1888px;top:350px">10%</div>
<svg class="a" style="left:1979px;top:355px" width="14" height="9"><path d="M1.5 1.5 L7 7 L12.5 1.5" fill="none" stroke="#444" stroke-width="1.1"/></svg>
<div class="lab" style="left:2025px;top:349px">Brim:</div>
<div class="a" style="left:2070px;top:348px;width:23px;height:23px;border:1px solid #333;background:#fff"></div>
<div class="a" style="left:1837px;top:384px;width:624px;height:741px;border:1px solid #828282;background:#fff"></div>
<div class="a" style="left:2137px;top:385px;width:1px;height:31px;background:#e5e5e5"></div><div class="a" style="left:2182px;top:385px;width:1px;height:31px;background:#e5e5e5"></div>
<div class="lab" style="left:1845px;top:390px">Name</div><div class="lab" style="left:2293px;top:390px">Editing</div>
<div class="a" style="left:1838px;top:416px;width:622px;height:30px;background:#d9d9d9"></div>
<svg class="a" style="left:1843px;top:426px" width="16" height="11"><path d="M2 2 L8 8 L14 2" fill="none" stroke="#222" stroke-width="2.6"/></svg>
<div class="lab" style="left:1866px;top:423px">Hinged Box V3 - ...lled Bottom.stl</div>
<svg class="a" style="left:2149px;top:423px" width="22" height="16" viewBox="0 0 22 16"><path d="M1 8 Q11 -2 21 8 Q11 18 1 8 Z" fill="none" stroke="#888" stroke-width="2"/><circle cx="11" cy="8" r="3.5" fill="#888"/></svg>
<svg class="a" style="left:2306px;top:420px" width="24" height="24" viewBox="0 0 24 24"><path d="M12 5 H3 V21 H18 V13" fill="none" stroke="#888" stroke-width="2"/><circle cx="18" cy="6" r="3.5" fill="none" stroke="#ed6b21" stroke-width="2"/></svg>
<svg class="a" style="left:1874px;top:450px" width="22" height="25" viewBox="0 0 22 25"><path d="M1.5 1.5 Q6 6 11 8.5 Q16 6 20.5 1.5" fill="none" stroke="#777" stroke-width="1"/><path d="M6.5 8 H15.5 V15.5 H13 V20.5 Q11 23 9 20.5 V15.5 H6.5 Z M6.5 11.5 H15.5 M9 8 V11.5 M11 8.5 V11.5 M13 8 V11.5" fill="none" stroke="#ed7d45" stroke-width="1.3"/></svg>
<div class="lab" style="left:1901px;top:453px">Paint-on supports</div>
<div class="a" style="left:1837px;top:1145px;width:624px;height:234px;border:1px solid #dcdcdc;border-right:none"></div>
<div class="lab" style="left:1846px;top:1136px;font-weight:bold;background:#fff;padding:0 5px">Object manipulation</div>
<div class="cb" style="left:1849px;top:1164px;width:225px;height:33px"></div><div class="lab" style="left:1853px;top:1171px">World coordinates</div>
<svg class="a" style="left:2053px;top:1175px" width="14" height="9"><path d="M1.5 1.5 L7 7 L12.5 1.5" fill="none" stroke="#444" stroke-width="1.1"/></svg>
<div class="lab" style="left:2101px;top:1171px;font-weight:bold">X</div>
<div class="lab" style="left:2193px;top:1171px;font-weight:bold">Y</div>
<div class="lab" style="left:2287px;top:1171px;font-weight:bold">Z</div>
<div class="lab" style="left:1851px;top:1206px">Position:</div>
<div class="fld" style="left:2077px;top:1200px">115.5</div>
<div class="fld" style="left:2170px;top:1200px">115.5</div>
<div class="fld" style="left:2263px;top:1200px">28.8</div>
<div class="lab" style="left:2356px;top:1207px">mm</div>
<div class="lab" style="left:1851px;top:1242px">Rotate:</div>
<div class="fld" style="left:2077px;top:1236px">0</div>
<div class="fld" style="left:2170px;top:1236px">0</div>
<div class="fld" style="left:2263px;top:1236px">0</div>
<div class="lab" style="left:2356px;top:1243px">°</div>
<div class="lab" style="left:1877px;top:1278px">Scale factors:</div>
<div class="fld" style="left:2077px;top:1272px">100</div>
<div class="fld" style="left:2170px;top:1272px">100</div>
<div class="fld" style="left:2263px;top:1272px">100</div>
<div class="lab" style="left:2356px;top:1279px">%</div>
<div class="lab" style="left:1877px;top:1314px">Size:</div>
<div class="fld" style="left:2077px;top:1308px">82.29</div>
<div class="fld" style="left:2170px;top:1308px">138.6</div>
<div class="fld" style="left:2263px;top:1308px">57.61</div>
<div class="lab" style="left:2356px;top:1315px">mm</div>
<svg class="a" style="left:2398px;top:1205px" width="22" height="24" viewBox="0 0 22 24"><path d="M11 5 H3 V16 H15 V11" fill="none" stroke="#888" stroke-width="1.8"/><circle cx="16" cy="5" r="3" fill="#888"/><rect x="1" y="20" width="20" height="3" rx="1.5" fill="#ed6b21"/></svg>
<svg class="a" style="left:1852px;top:1295px" width="18" height="22" viewBox="0 0 18 22"><path d="M3.8 11 V5.5 Q3.8 2 7.3 2 H10.7 Q14.2 2 14.2 5.5 V11" fill="none" stroke="#808080" stroke-width="2.8"/><rect x="0.5" y="11" width="17" height="10" rx="1.5" fill="#808080"/><circle cx="7.8" cy="16.5" r="2" fill="#fff"/><rect x="8" y="15.8" width="5" height="1.4" fill="#fff"/></svg>
<div class="a" style="left:1849px;top:1345px;width:23px;height:23px;border:1px solid #333;background:#fff"></div><div class="lab" style="left:1876px;top:1346px">Inches</div>
<div class="a" style="left:1837px;top:1400px;width:624px;height:110px;border:1px solid #dcdcdc;border-right:none"></div>
<div class="lab" style="left:1842px;top:1390px;font-weight:bold;background:#fff;padding:0 4px">Info</div>
<div class="lab" style="left:1846px;top:1419px">Size:</div><div class="lab" style="left:1913px;top:1419px">82.29 x 138.60 x 57.61</div><div class="lab" style="left:2106px;top:1419px">Volume:</div><div class="lab" style="left:2186px;top:1419px">98517.62</div>
<div class="lab" style="left:1846px;top:1449px">Facets:</div><div class="lab" style="left:1913px;top:1449px">273608 (15 shells)</div>
<div class="lab" style="left:1847px;top:1480px">No errors detected</div>
<div class="a" style="left:1837px;top:1530px;width:624px;height:197px;border:1px solid #dcdcdc;border-right:none"></div>
<div class="lab" style="left:1842px;top:1521px;font-weight:bold;background:#fff;padding:0 4px">Sliced Info</div>
<div class="lab" style="left:1846px;top:1549px">Used Filament (g)</div><div class="lab" style="left:2049px;top:1549px">122.77</div>
<div class="lab" style="left:1846px;top:1580px">Used Filament (m)</div><div class="lab" style="left:2049px;top:1580px">41.16</div>
<div class="lab" style="left:1846px;top:1611px">Used Filament (mm<sup style="font-size:11px">3</sup>)</div><div class="lab" style="left:2049px;top:1611px">99010.74</div>
<div class="lab" style="left:1846px;top:1642px">Cost</div><div class="lab" style="left:2049px;top:1642px">2.46</div>
<div class="lab" style="left:1846px;top:1673px">Estimated printing time:</div>
<div class="lab" style="left:1846px;top:1698px">&nbsp;&nbsp;- normal mode</div><div class="lab" style="left:2049px;top:1698px">12h13m</div>
<div class="a" style="left:1837px;top:1736px;width:568px;height:49px;background:#e1e1e1"></div><div class="lab" style="left:2058px;top:1750px;font-weight:bold;font-size:19px">Export G-code</div>
<div class="a" style="left:2411px;top:1736px;width:49px;height:49px;background:#e1e1e1"></div>
<svg class="a" style="left:2418px;top:1738px" width="40" height="46" viewBox="0 0 40 46"><rect x="22" y="2" width="14" height="32" rx="3" fill="#ed6b21"/><path d="M8 16 H24 V40 H6 V18 Z" fill="#888"/><path d="M9 30 V38 M12 30 V38 M15 30 V38 M18 30 V38" stroke="#ddd" stroke-width="1.5"/><rect x="26" y="36" width="10" height="8" fill="#777"/></svg>
<!-- bottom bar -->
<div class="lab" style="left:6px;top:1736px">View</div>
<div class="cb" style="left:48px;top:1730px;width:157px;height:32px"></div><div class="lab" style="left:53px;top:1737px">Feature type</div>
<svg class="a" style="left:183px;top:1742px" width="14" height="9"><path d="M1.5 1.5 L7 7 L12.5 1.5" fill="none" stroke="#444" stroke-width="1.1"/></svg>
<div class="lab" style="left:215px;top:1736px">Show</div>
<div class="cb" style="left:264px;top:1730px;width:312px;height:32px;background:#f0f0f0"></div><div class="lab" style="left:269px;top:1737px">Options</div>
<svg class="a" style="left:555px;top:1742px" width="14" height="9"><path d="M1.5 1.5 L7 7 L12.5 1.5" fill="none" stroke="#444" stroke-width="1.1"/></svg>
<div class="a" style="left:598px;top:1745px;width:1055px;height:3px;background:#ed6b21"></div>
<svg class="a" style="left:588px;top:1735px" width="14" height="22"><path d="M13 1 L1 11 L13 21 Z" fill="#ed6b21"/></svg>
<svg class="a" style="left:1645px;top:1735px" width="14" height="22"><path d="M1 1 L13 11 L1 21 Z" fill="#ed6b21"/></svg>
<div class="lab" style="left:601px;top:1763px">778750</div>
<div class="lab" style="left:1585px;top:1711px">778837</div>
<div class="a" style="left:0;top:1784px;width:2461px;height:1px;background:#111"></div>
<!-- window border -->
<div class="a" style="left:0;top:0;width:2461px;height:1px;background:#222"></div>
<div class="a" style="left:0;top:0;width:1px;height:1785px;background:#111"></div>
<div class="a" style="left:2460px;top:0;width:1px;height:1785px;background:#222"></div>

</body></html>
